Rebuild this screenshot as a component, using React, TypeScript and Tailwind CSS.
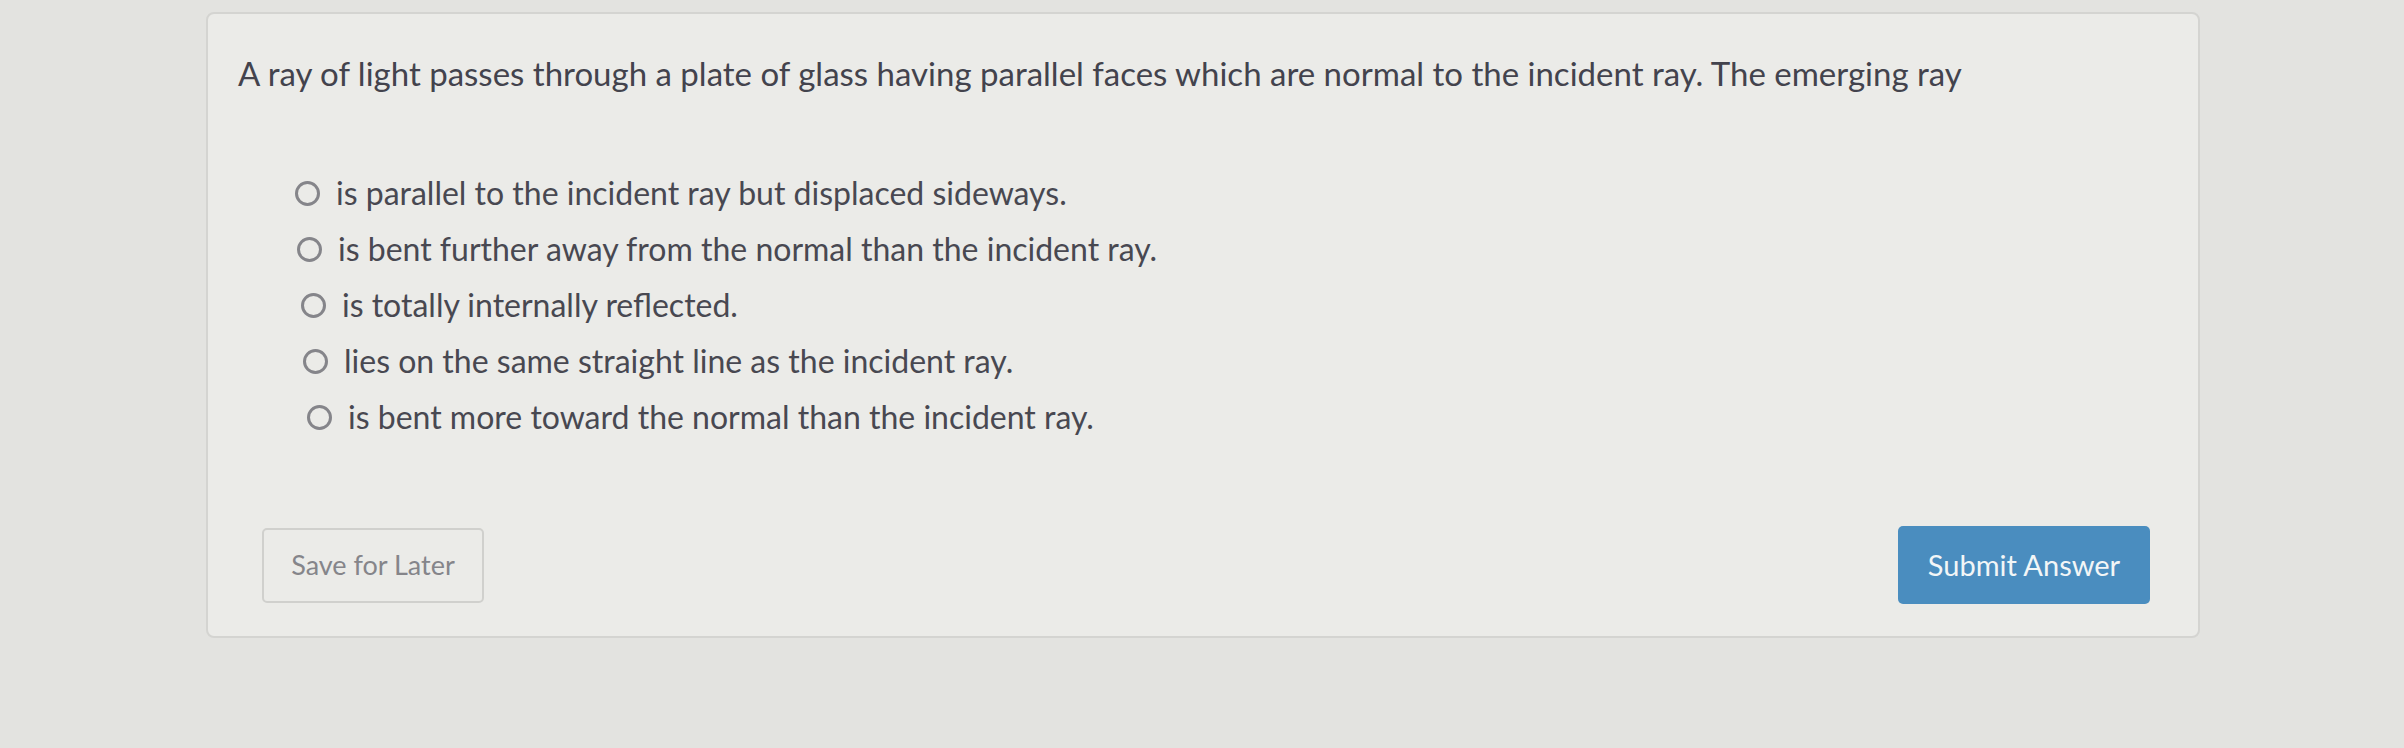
import React from "react";

type Choice = {
  id: string;
  text: string;
  indent: string;
};

// 화면 사진의 원근감 때문에 아래 선택지일수록 살짝 오른쪽으로 밀려 있음
const choices: Choice[] = [
  { id: "a", text: "is parallel to the incident ray but displaced sideways.", indent: "ml-[57px]" },
  { id: "b", text: "is bent further away from the normal than the incident ray.", indent: "ml-[59px]" },
  { id: "c", text: "is totally internally reflected.", indent: "ml-[63px]" },
  { id: "d", text: "lies on the same straight line as the incident ray.", indent: "ml-[65px]" },
  { id: "e", text: "is bent more toward the normal than the incident ray.", indent: "ml-[69px]" },
];

const App: React.FC = () => {
  return (
    <div className="w-full min-h-screen bg-[#e3e3e0] pt-[12px] font-['Lato','Noto_Sans',sans-serif]">
      <div className="ml-[206px] w-[1994px] h-[626px] rounded-[8px] border-2 border-[#d4d4d1] bg-[#ebebe8] pt-[40px] pl-[30px] pr-[48px]">
        <p className="text-[33px] leading-[38px] text-[#43434d]">
          A ray of light passes through a plate of glass having parallel faces which are normal to the incident ray. The emerging ray
        </p>

        <ul className="mt-[82px] flex flex-col gap-[18px]">
          {choices.map((choice) => (
            <li key={choice.id} className={`flex items-center ${choice.indent}`}>
              <span className="w-[25px] h-[25px] rounded-full border-[3px] border-[#85858a] shrink-0"></span>
              <span className="ml-[16px] text-[32px] leading-[38px] text-[#484851]">{choice.text}</span>
            </li>
          ))}
        </ul>

        <div className="mt-[90px] flex justify-between items-center">
          <button className="ml-[24px] w-[222px] h-[75px] rounded-[5px] border-2 border-[#d0d0cd] bg-[#ebebe8] text-[27px] text-[#85858a]">
            Save for Later
          </button>
          <button className="w-[252px] h-[78px] rounded-[5px] bg-[#4a8dbf] text-[29px] text-[#f2f6f7]">
            Submit Answer
          </button>
        </div>
      </div>
    </div>
  );
};

export default App;
